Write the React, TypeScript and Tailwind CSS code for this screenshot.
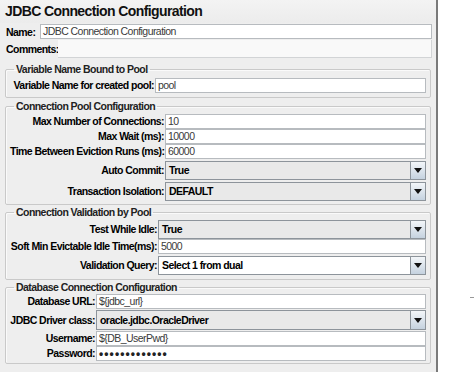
import React from "react";

const font = "font-['Liberation_Sans',Arial,sans-serif]";
const txt = "text-[10.5px] tracking-[-0.55px] leading-none";

function TextField({ value }: { value?: string }) {
  return (
    <div className={`h-[15px] flex-1 bg-white border border-[#b7bbbf] px-[2px] flex items-center text-[#3a3a3a] whitespace-nowrap overflow-hidden ${txt}`}>
      {value}
    </div>
  );
}

function Combo({ value, editable, tall }: { value: string; editable?: boolean; tall?: boolean }) {
  return (
    <div
      className={`${tall ? "h-[20px]" : "h-[19px]"} flex-1 flex border border-[#8d949b] ${
        editable ? "bg-white" : "bg-[#e9e9e9]"
      }`}
    >
      <div className={`flex-1 flex items-center px-[3px] font-bold text-black ${txt}`}>
        {value}
      </div>
      <div className="w-[15px] border-l border-[#8d949b] bg-gradient-to-b from-[#f3f6f9] to-[#c5d2df] flex items-center justify-center">
        <svg width="8" height="5" viewBox="0 0 8 5">
          <path d="M0 0h8L4 5z" fill="#111" />
        </svg>
      </div>
    </div>
  );
}

function Row({
  label,
  labelW,
  children,
}: {
  label: string;
  labelW: string;
  children: React.ReactNode;
}) {
  return (
    <div className="flex items-center">
      <div className={`${labelW} shrink-0 text-right pr-[1px] font-bold text-black whitespace-nowrap ${txt}`}>
        {label}
      </div>
      {children}
    </div>
  );
}

function Section({
  title,
  className,
  children,
}: {
  title: string;
  className?: string;
  children: React.ReactNode;
}) {
  return (
    <fieldset
      className={`mx-[5px] pl-[4px] pr-[4px] border border-[#c9c9c9] rounded-[2px] shadow-[inset_1px_1px_0_#fafafa] ${className ?? ""}`}
    >
      <legend className="ml-[4px] px-[2px] text-[10.5px] tracking-[-0.55px] font-bold text-[#222] leading-[14px]">
        {title}
      </legend>
      {children}
    </fieldset>
  );
}

export default function App() {
  return (
    <div className={`w-[474px] h-[372px] flex bg-white overflow-hidden ${font}`}>
      <div className="w-[436px] h-full bg-[#eeeeee] flex flex-col">
        {/* Title */}
        <div className="h-[23px] pl-[5px] pt-[3px] bg-gradient-to-b from-[#f3f3f3] to-[#ececec] text-[14px] tracking-[-0.6px] font-bold text-[#111] leading-[17px]">
          JDBC Connection Configuration
        </div>

        {/* Name / Comments */}
        <div className="flex items-center pl-[6px] pr-[4px] mt-[1px]">
          <span className={`w-[34px] font-bold ${txt}`}>Name:</span>
          <div className="flex-1 flex h-[16px]">
            <TextField value="JDBC Connection Configuration" />
          </div>
        </div>
        <div className="flex items-center pl-[6px] pr-[4px] h-[18px]">
          <span className={`w-[52px] font-bold ${txt}`}>Comments:</span>
          <div className="flex-1 h-full bg-[#f9f9f9] border-r border-b border-[#d2d4d6]" />
        </div>

        <Section title="Variable Name Bound to Pool" className="mt-[4px] pb-[4px] pt-[2px]">
          <Row label="Variable Name for created pool:" labelW="w-[145px]">
            <TextField value="pool" />
          </Row>
        </Section>

        <Section title="Connection Pool Configuration" className="mt-[1px] pb-[3px] pt-[1px]">
          <div className="flex flex-col">
            <Row label="Max Number of Connections:" labelW="w-[155px]">
              <TextField value="10" />
            </Row>
            <Row label="Max Wait (ms):" labelW="w-[155px]">
              <TextField value="10000" />
            </Row>
            <Row label="Time Between Eviction Runs (ms):" labelW="w-[155px]">
              <TextField value="60000" />
            </Row>
            <div className="mt-[2px]">
              <Row label="Auto Commit:" labelW="w-[155px]">
                <Combo value="True" />
              </Row>
            </div>
            <div className="mt-[2px]">
              <Row label="Transaction Isolation:" labelW="w-[155px]">
                <Combo value="DEFAULT" />
              </Row>
            </div>
          </div>
        </Section>

        <Section title="Connection Validation by Pool" className="mt-[0px] pb-[4px] pt-[1px]">
          <div className="flex flex-col">
            <Row label="Test While Idle:" labelW="w-[148px]">
              <Combo value="True" />
            </Row>
            <Row label="Soft Min Evictable Idle Time(ms):" labelW="w-[148px]">
              <TextField value="5000" />
            </Row>
            <div className="mt-[2px]">
              <Row label="Validation Query:" labelW="w-[148px]">
                <Combo value="Select 1 from dual" editable />
              </Row>
            </div>
          </div>
        </Section>

        <Section title="Database Connection Configuration" className="mt-[0px] pb-[2px]">
          <div className="flex flex-col">
            <Row label="Database URL:" labelW="w-[86px]">
              <TextField value="${jdbc_url}" />
            </Row>
            <div className="my-[1px]">
              <Row label="JDBC Driver class:" labelW="w-[86px]">
                <Combo value="oracle.jdbc.OracleDriver" tall />
              </Row>
            </div>
            <Row label="Username:" labelW="w-[86px]">
              <TextField value="${DB_UserPwd}" />
            </Row>
            <Row label="Password:" labelW="w-[86px]">
              <div className="h-[15px] flex-1 bg-white border border-[#b7bbbf] px-[2px] flex items-center text-[12px] font-bold tracking-[1.1px] text-[#222] leading-none">
                •••••••••••••
              </div>
            </Row>
          </div>
        </Section>
      </div>
      <div className="w-[2px] h-full bg-[#7a7a7a]" />
      <div className="flex-1 h-full pt-[297px] flex justify-end">
        <div className="w-[4px] h-[1px] bg-[#999]" />
      </div>
    </div>
  );
}
